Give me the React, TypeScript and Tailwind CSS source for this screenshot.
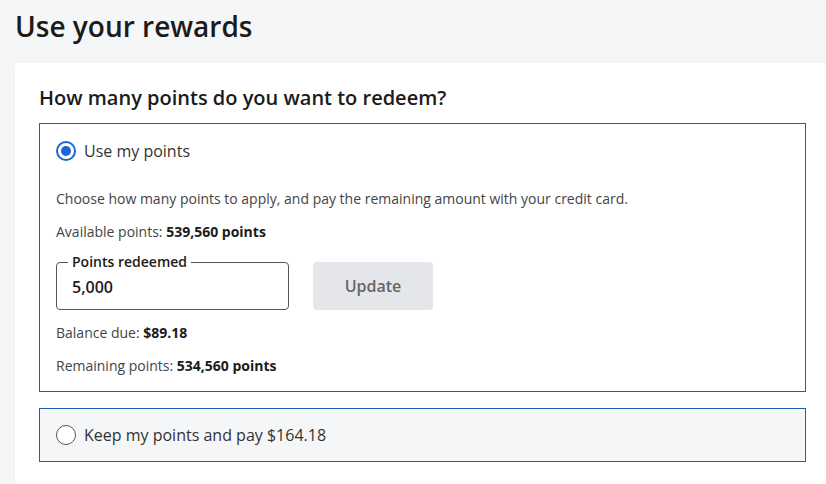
export default function App() {
  return (
    <div className="min-h-screen w-full overflow-hidden bg-[#f5f6f8] text-[#1b1b1b]" style={{ fontFamily: '"Open Sans", "Noto Sans", sans-serif' }}>
      <div className="pl-[15px] pt-[8px]">
        <h1 className="text-[28px] leading-[36px] font-semibold text-[#1b1b1b]">Use your rewards</h1>

        <div className="mt-[19px] mr-[-4px] rounded-[4px] bg-white px-[24px] pt-[21px] pb-[24px] shadow-[0_0_2px_rgba(0,0,0,0.06)]">
          <h2 className="text-[20px] leading-[28px] font-semibold text-[#1b1b1b]">How many points do you want to redeem?</h2>

          {/* Option 1 */}
          <div className="mt-[11px] border border-[#1c5db5] bg-white px-[16px] pt-[15px] pb-[15px]">
            <label className="flex items-center gap-[8px]">
              <span className="flex h-[20px] w-[20px] items-center justify-center rounded-full border-2 border-[#1a66d2]">
                <span className="h-[10px] w-[10px] rounded-full bg-[#1a66d2]" />
              </span>
              <span className="text-[16px] leading-[24px] text-[#333]">Use my points</span>
            </label>

            <p className="mt-[26px] text-[14px] leading-[20px] text-[#444]">
              Choose how many points to apply, and pay the remaining amount with your credit card.
            </p>
            <p className="mt-[13px] text-[14px] leading-[20px] text-[#444]">
              Available points: <span className="font-bold text-[#1b1b1b]">539,560 points</span>
            </p>

            <div className="mt-[20px] flex items-start gap-[24px]">
              <div className="relative flex h-[48px] w-[233px] items-center rounded-[4px] border border-[#555] px-[15px]">
                <span className="absolute left-[11px] top-[-10px] bg-white px-[4px] text-[14px] leading-[18px] font-semibold text-[#1b1b1b]">
                  Points redeemed
                </span>
                <span className="pt-[1px] text-[16px] leading-[24px] font-semibold text-[#1b1b1b]">5,000</span>
              </div>
              <button className="h-[48px] w-[120px] rounded-[4px] bg-[#e4e6e9] text-[16px] font-semibold text-[#666]">
                Update
              </button>
            </div>

            <p className="mt-[13px] text-[14px] leading-[20px] text-[#444]">
              Balance due: <span className="font-bold text-[#1b1b1b]">$89.18</span>
            </p>
            <p className="mt-[13px] text-[14px] leading-[20px] text-[#444]">
              Remaining points: <span className="font-bold text-[#1b1b1b]">534,560 points</span>
            </p>
          </div>

          {/* Option 2 */}
          <div className="mt-[16px] border border-[#1c5db5] bg-[#f5f6f8] px-[16px] py-[15px]">
            <label className="flex items-center gap-[8px]">
              <span className="h-[20px] w-[20px] rounded-full border border-[#555] bg-white" />
              <span className="text-[16px] leading-[22px] text-[#333]">Keep my points and pay $164.18</span>
            </label>
          </div>
        </div>
      </div>
    </div>
  );
}
